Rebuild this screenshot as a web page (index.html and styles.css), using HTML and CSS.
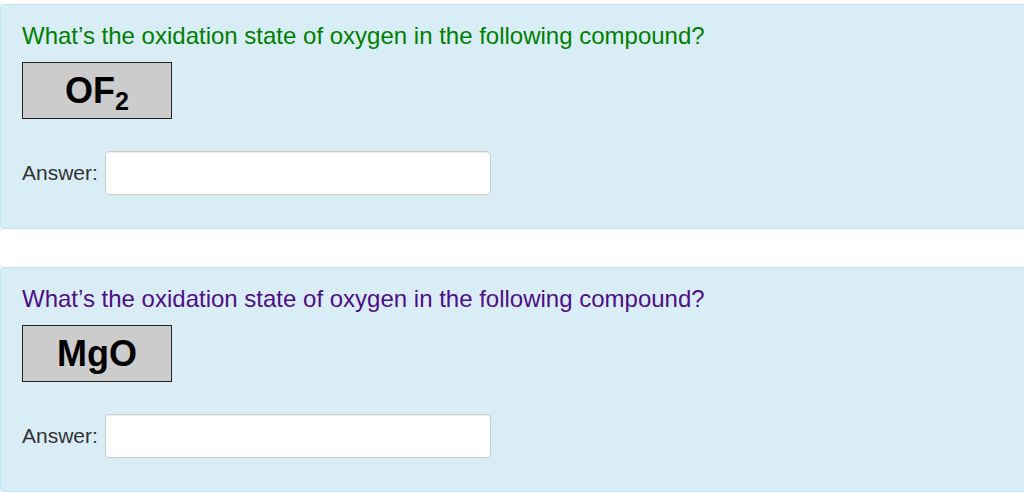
FILE: index.html
```html
<!DOCTYPE html>
<html>
<head>
  <title>Oxidation states</title>
  <meta charset="UTF-8">
  <link rel="stylesheet" href="styles.css">
</head>
<body>
  <div id="quiz">
    <div class="panel">
      <p class="question correct">What’s the oxidation state of oxygen in the following compound?</p>
      <div class="formula"><span>OF<sub>2</sub></span></div>
      <div class="answer-row">
        <label for="answer-1">Answer:</label>
        <input type="text" id="answer-1" class="answer-input">
      </div>
    </div>

    <div class="panel">
      <p class="question pending">What’s the oxidation state of oxygen in the following compound?</p>
      <div class="formula"><span>MgO</span></div>
      <div class="answer-row">
        <label for="answer-2">Answer:</label>
        <input type="text" id="answer-2" class="answer-input">
      </div>
    </div>
  </div>
</body>
</html>
```

FILE: styles.css
```css
body {
  margin: 0;
  background-color: #fff;
  font-family: 'Liberation Sans', Arial, sans-serif;
  overflow: hidden;
}

#quiz {
  padding-top: 4px;
  margin-right: -12px;
  display: flex;
  flex-direction: column;
  gap: 38px;
}

.panel {
  background-color: #d9edf7;
  border: 1px solid #bce8f1;
  border-radius: 4px;
  padding: 16px 21px 33px;
}

.question {
  margin: 0;
  font-size: 24px;
  line-height: 29px;
}

.question.correct {
  color: #008000;
}

.question.pending {
  color: #4f0d87;
}

.formula {
  margin-top: 12px;
  width: 148px;
  height: 55px;
  border: 1px solid #222;
  background-color: #ccc;
  color: #000;
  font-weight: bold;
  font-size: 36px;
  line-height: 1;
  display: flex;
  align-items: center;
  justify-content: center;
}

.formula sub {
  font-size: 25px;
  line-height: 0;
  vertical-align: -7px;
}

.answer-row {
  margin-top: 32px;
  display: flex;
  align-items: center;
  gap: 7px;
}

.answer-row label {
  color: #333;
  font-size: 21px;
}

.answer-input {
  width: 386px;
  height: 44px;
  box-sizing: border-box;
  border: 1px solid #ccc;
  border-radius: 4px;
  background-color: #fff;
  box-shadow: inset 0 1px 1px rgba(0, 0, 0, 0.075);
  padding: 6px 12px;
  font-size: 16px;
}
```
